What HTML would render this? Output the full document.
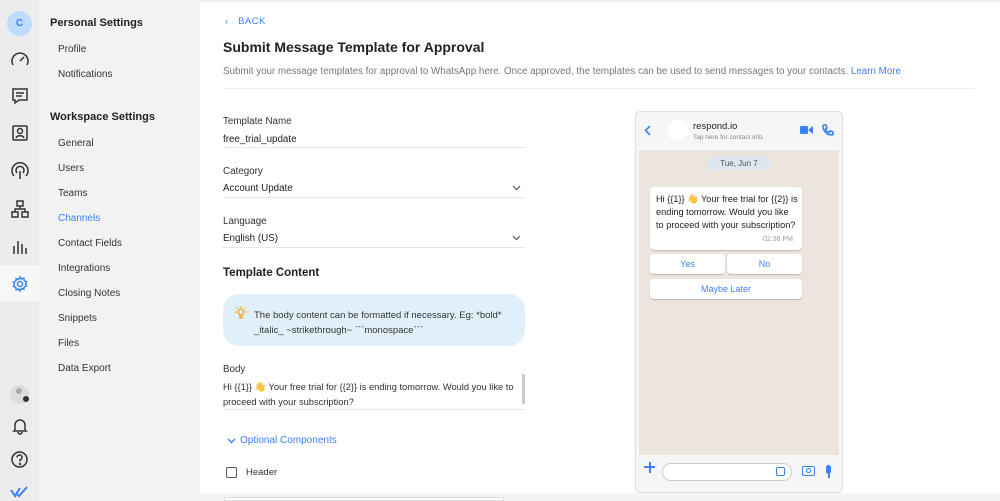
<!DOCTYPE html><html><head><meta charset="utf-8"><style>
*{margin:0;padding:0;box-sizing:border-box}
body{width:1000px;height:501px;overflow:hidden;font-family:"Liberation Sans",Arial,sans-serif;background:#fff;position:relative;color:#222}
.a{position:absolute;white-space:nowrap}
.rail{position:absolute;left:0;top:0;width:39px;height:501px;background:#ececec}
.nav{position:absolute;left:39px;top:0;width:161px;height:501px;background:#f2f2f2}
.ni{position:absolute;left:58px;font-size:10px;color:#333}
.nh{position:absolute;left:50px;font-size:11px;font-weight:bold;color:#222}
.lbl{font-size:9.8px;color:#333}
.val{font-size:9.8px;color:#222}
.line{position:absolute;left:223px;width:302px;height:1px;background:#e8e8e8}
svg.i{position:absolute;fill:none;stroke:#333;stroke-width:1.5}
.btn{position:absolute;background:#fff;border-radius:4px;box-shadow:0 1px 1px rgba(0,0,0,.2);color:#3b82f6;font-size:9px;text-align:center;line-height:20px}
</style></head><body>
<div class="rail"></div>
<div class="a" style="left:0;top:265px;width:39px;height:37px;background:#f7f7f7"></div>
<div class="nav"></div>
<div class="a" style="left:7px;top:11px;width:25px;height:25px;border-radius:50%;background:#bfdbfe;color:#3b82f6;font-size:10px;font-weight:bold;text-align:center;line-height:25px">C</div>
<svg class="i" style="left:10px;top:50px" width="20" height="18" viewBox="0 0 20 18"><path d="M3 15A8 8 0 1 1 17 15"/><path d="M10 11l4-4"/></svg>
<svg class="i" style="left:11px;top:87px" width="18" height="18" viewBox="0 0 18 18"><path d="M2 2h14v11H8l-4 3v-3H2z"/><path d="M5 6h8M5 9h6"/></svg>
<svg class="i" style="left:11px;top:124px" width="18" height="18" viewBox="0 0 18 18"><rect x="2" y="2" width="14" height="14" rx="1"/><circle cx="9" cy="7" r="2.5"/><path d="M5 14c1-3 7-3 8 0"/></svg>
<svg class="i" style="left:10px;top:162px" width="20" height="18" viewBox="0 0 20 18"><path d="M4 14A8 8 0 1 1 16 14M7 11a4 4 0 1 1 6 0"/><path d="M10 9v8"/></svg>
<svg class="i" style="left:11px;top:200px" width="18" height="18" viewBox="0 0 18 18"><rect x="6" y="1" width="6" height="5"/><rect x="1" y="12" width="6" height="5"/><rect x="11" y="12" width="6" height="5"/><path d="M9 6v3M4 12V9h10v3"/></svg>
<svg class="i" style="left:11px;top:237px" width="18" height="18" viewBox="0 0 18 18"><path d="M3 17V9M7 17V4M11 17V7M15 17v-6"/></svg>
<svg class="i" style="left:11px;top:275px;stroke:#3b82f6" width="18" height="18" viewBox="0 0 18 18"><circle cx="9" cy="9" r="2.5"/><path d="M9 2l1.5 2 2.3-.8.4 2.4 2.3.9-1 2.2 1 2.2-2.3.9-.4 2.4-2.3-.8L9 16l-1.5-2-2.3.8-.4-2.4-2.3-.9 1-2.2-1-2.2 2.3-.9.4-2.4 2.3.8z"/></svg>
<div class="a" style="left:10px;top:385px;width:19px;height:19px;border-radius:50%;background:#ddd"></div>
<div class="a" style="left:16px;top:388px;width:6px;height:6px;border-radius:50%;background:#aaa"></div>
<div class="a" style="left:23px;top:396px;width:6px;height:6px;border-radius:50%;background:#333"></div>
<svg class="i" style="left:11px;top:417px" width="18" height="18" viewBox="0 0 18 18"><path d="M4 13V8a5 5 0 0 1 10 0v5l1 1H3z"/><path d="M7 15a2 2 0 0 0 4 0"/></svg>
<svg class="i" style="left:10px;top:450px" width="19" height="19" viewBox="0 0 19 19"><circle cx="9.5" cy="9.5" r="7.5"/><path d="M7 7.5a2.5 2.5 0 1 1 3 2.4V11.5"/><circle cx="10" cy="14" r=".5"/></svg>
<svg class="i" style="left:10px;top:486px;stroke:#3b82f6;stroke-width:2" width="20" height="12" viewBox="0 0 20 12"><path d="M1 4l4 6 5-8M7 8l2 2 8-9"/></svg>

<div class="nh" style="top:17px">Personal Settings</div>
<div class="ni" style="top:44px">Profile</div>
<div class="ni" style="top:69px">Notifications</div>
<div class="nh" style="top:111px">Workspace Settings</div>
<div class="ni" style="top:138px">General</div>
<div class="ni" style="top:163px">Users</div>
<div class="ni" style="top:188px">Teams</div>
<div class="ni" style="top:213px;color:#3b82f6">Channels</div>
<div class="ni" style="top:238px">Contact Fields</div>
<div class="ni" style="top:263px">Integrations</div>
<div class="ni" style="top:288px">Closing Notes</div>
<div class="ni" style="top:313px">Snippets</div>
<div class="ni" style="top:338px">Files</div>
<div class="ni" style="top:363px">Data Export</div>

<div class="a" style="left:200px;top:0;width:800px;height:2px;background:#eee"></div>
<div class="a" style="left:225px;top:16px;font-size:9.5px;color:#3b82f6;letter-spacing:.5px">‹&nbsp;&nbsp;&nbsp;BACK</div>
<div class="a" style="left:223px;top:39px;font-size:14px;font-weight:bold;color:#222">Submit Message Template for Approval</div>
<div class="a" style="left:223px;top:66px;font-size:9.8px;color:#777">Submit your message templates for approval to WhatsApp here. Once approved, the templates can be used to send messages to your contacts. <span style="color:#3b82f6">Learn More</span></div>
<div class="a" style="left:223px;top:88px;width:752px;height:1px;background:#eee"></div>

<div class="a lbl" style="left:223px;top:116px">Template Name</div>
<div class="a val" style="left:223px;top:134px">free_trial_update</div>
<div class="line" style="top:147px"></div>
<div class="a lbl" style="left:223px;top:166px">Category</div>
<div class="a val" style="left:223px;top:183px">Account Update</div>
<svg class="i" style="left:512px;top:185px;stroke:#555;stroke-width:1.2" width="9" height="6" viewBox="0 0 9 6"><path d="M1 1l3.5 3.5L8 1"/></svg>
<div class="line" style="top:197px"></div>
<div class="a lbl" style="left:223px;top:216px">Language</div>
<div class="a val" style="left:223px;top:233px">English (US)</div>
<svg class="i" style="left:512px;top:235px;stroke:#555;stroke-width:1.2" width="9" height="6" viewBox="0 0 9 6"><path d="M1 1l3.5 3.5L8 1"/></svg>
<div class="line" style="top:247px"></div>
<div class="a" style="left:223px;top:267px;font-size:11.5px;font-weight:bold">Template Content</div>

<div class="a" style="left:223px;top:294px;width:302px;height:52px;background:#e0f0fb;border-radius:16px"></div>
<svg class="i" style="left:234px;top:306px;stroke:#f59e0b;stroke-width:1.2" width="14" height="14" viewBox="0 0 14 14"><circle cx="7" cy="6" r="2.8"/><path d="M6 9v3h2V9M7 0.5v1.5M1 6h1.5M11.5 6H13M2.5 1.5l1 1M11.5 1.5l-1 1"/></svg>
<div class="a" style="left:254px;top:308px;font-size:9.5px;color:#333;line-height:15px">The body content can be formatted if necessary. Eg: *bold*<br>_italic_ ~strikethrough~ &#96;&#96;&#96;monospace&#96;&#96;&#96;</div>

<div class="a lbl" style="left:223px;top:364px">Body</div>
<div class="a" style="left:223px;top:380px;font-size:9.3px;color:#333;line-height:15px">Hi {{1}} 👋 Your free trial for {{2}} is ending tomorrow. Would you like to<br>proceed with your subscription?</div>
<div class="a" style="left:522px;top:374px;width:3px;height:30px;background:#ccc"></div>
<div class="line" style="top:409px"></div>
<svg class="i" style="left:227px;top:438px;stroke:#3b82f6;stroke-width:1.4" width="9" height="6" viewBox="0 0 9 6"><path d="M1 1l3.5 3.5L8 1"/></svg>
<div class="a" style="left:240px;top:435px;font-size:10px;color:#3b82f6">Optional Components</div>
<div class="a" style="left:226px;top:467px;width:11px;height:11px;border:1.5px solid #555;border-radius:2px"></div>
<div class="a" style="left:246px;top:467px;font-size:9.5px;color:#333">Header</div>
<div class="a" style="left:200px;top:493px;width:800px;height:8px;background:#f4f4f4"></div>
<div class="a" style="left:224px;top:497px;width:280px;height:4px;border:1px solid #ddd;background:#fff"></div>

<div class="a" style="left:635px;top:111px;width:208px;height:382px;border:1px solid #ddd;border-radius:5px;background:#f6f6f6"></div>
<div class="a" style="left:639px;top:150px;width:200px;height:305px;background:#ece5dd"></div>
<svg class="i" style="left:644px;top:125px;stroke:#3b82f6;stroke-width:1.6" width="7" height="11" viewBox="0 0 7 11"><path d="M6 1L1.5 5.5 6 10"/></svg>
<div class="a" style="left:667px;top:120px;width:21px;height:21px;border-radius:50%;background:#fff"></div>
<div class="a" style="left:693px;top:121px;font-size:9.5px;color:#222">respond.io</div>
<div class="a" style="left:693px;top:134px;font-size:6.5px;color:#888">Tap here for contact info</div>
<div class="a" style="left:800px;top:126px;width:8px;height:8px;background:#3b82f6;border-radius:1px"></div>
<div class="a" style="left:808px;top:126px;border-right:5px solid #3b82f6;border-top:4px solid transparent;border-bottom:4px solid transparent"></div>
<svg class="i" style="left:822px;top:124px;stroke:#3b82f6;stroke-width:1.6" width="12" height="12" viewBox="0 0 12 12"><path d="M2 1l2 0 1 3-1.5 1a6 6 0 0 0 3.5 3.5L8 7l3 1v2c0 1-1 1-1 1C5 11 1 7 1 2c0 0 0-1 1-1z"/></svg>
<div class="a" style="left:708px;top:157px;width:62px;height:13px;border-radius:6px;background:#dde6ee;font-size:8px;color:#555;text-align:center;line-height:13px">Tue, Jun 7</div>
<div class="a" style="left:650px;top:187px;width:152px;height:63px;background:#fff;border-radius:4px;box-shadow:0 1px 1px rgba(0,0,0,.2)"></div>
<div class="a" style="left:656px;top:193px;font-size:9.2px;line-height:13px;color:#222">Hi {{1}} 👋 Your free trial for {{2}} is<br>ending tomorrow. Would you like<br>to proceed with your subscription?</div>
<div class="a" style="left:763px;top:236px;font-size:7px;color:#999">02:36 PM</div>
<div class="btn" style="left:650px;top:254px;width:75px">Yes</div>
<div class="btn" style="left:727px;top:254px;width:75px">No</div>
<div class="btn" style="left:650px;top:279px;width:152px">Maybe Later</div>
<div class="a" style="left:644px;top:466px;width:11px;height:2px;background:#3b82f6"></div>
<div class="a" style="left:648.5px;top:461.5px;width:2px;height:11px;background:#3b82f6"></div>
<div class="a" style="left:662px;top:463px;width:130px;height:18px;border:1px solid #ccc;border-radius:9px;background:#fff"></div>
<div class="a" style="left:776px;top:467px;width:9px;height:9px;border:1.5px solid #3b82f6;border-radius:2px"></div>
<div class="a" style="left:802px;top:466px;width:13px;height:10px;border:1.5px solid #3b82f6;border-radius:2px"></div>
<div class="a" style="left:806px;top:468px;width:5px;height:5px;border:1.5px solid #3b82f6;border-radius:50%"></div>
<div class="a" style="left:826px;top:465px;width:5px;height:9px;border-radius:3px;background:#3b82f6"></div>
<div class="a" style="left:828px;top:474px;width:1.5px;height:4px;background:#3b82f6"></div>
</body></html>
